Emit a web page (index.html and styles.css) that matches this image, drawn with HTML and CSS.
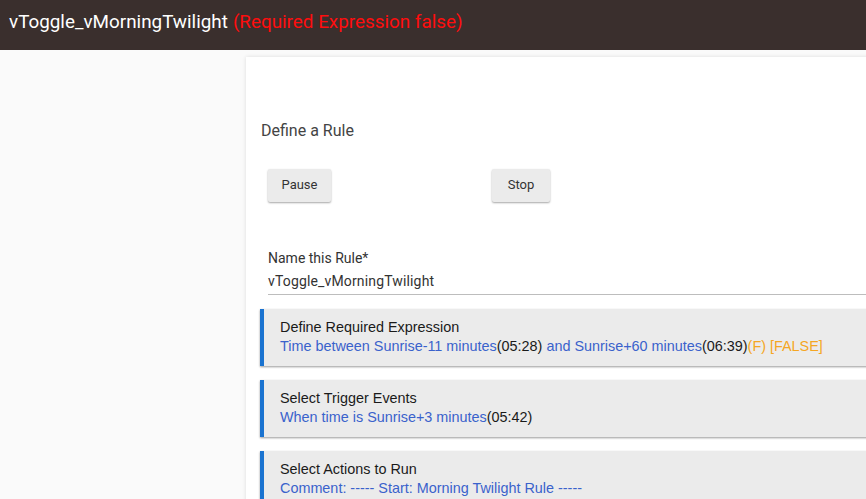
FILE: index.html
```html
<!DOCTYPE html>
<html>
<head>
<meta charset="utf-8">
<link rel="stylesheet" href="styles.css">
</head>
<body>
<header class="topbar">
  <span class="app-title">vToggle_vMorningTwilight</span>
  <span class="app-status">(Required Expression false)</span>
</header>
<div class="layout">
  <aside class="sidebar"></aside>
  <main class="panel">
    <h2 class="panel-title">Define a Rule</h2>
    <div class="actions">
      <button class="btn btn-pause">Pause</button>
      <button class="btn btn-stop">Stop</button>
    </div>
    <div class="field">
      <label class="field-label">Name this Rule*</label>
      <div class="field-value">vToggle_vMorningTwilight</div>
    </div>
    <div class="section">
      <div class="section-title">Define Required Expression</div>
      <div class="section-desc"><span class="lnk">Time between Sunrise-11 minutes</span>(05:28) <span class="lnk">and Sunrise+60 minutes</span>(06:39)<span class="warn">(F) [FALSE]</span></div>
    </div>
    <div class="section">
      <div class="section-title">Select Trigger Events</div>
      <div class="section-desc"><span class="lnk">When time is Sunrise+3 minutes</span>(05:42)</div>
    </div>
    <div class="section">
      <div class="section-title">Select Actions to Run</div>
      <div class="section-desc"><span class="lnk">Comment: ----- Start: Morning Twilight Rule -----</span></div>
    </div>
  </main>
</div>
</body>
</html>
```

FILE: styles.css
```css
html, body {
  margin: 0;
  padding: 0;
  overflow: hidden;
  height: 100%;
}
body {
  background: #fafafa;
  font-family: Roboto, "Liberation Sans", sans-serif;
}
.topbar {
  height: 50px;
  background: #3a2f2d;
  display: flex;
  align-items: center;
  padding-left: 9px;
  padding-bottom: 7px;
  box-sizing: border-box;
  font-size: 18.85px;
  white-space: nowrap;
}
.app-title {
  color: #ffffff;
}
.app-status {
  color: #ff0d0d;
  margin-left: 5px;
}
.layout {
  display: flex;
  width: 1100px;
}
.sidebar {
  width: 246px;
  flex: none;
}
.panel {
  margin-top: 7px;
  flex: 1;
  background: #ffffff;
  box-shadow: 0 0 4px rgba(0,0,0,0.12);
  padding: 64px 0 40px 14px;
  min-height: 600px;
}
.panel-title {
  margin: 0;
  font-size: 16px;
  font-weight: 400;
  line-height: 19px;
  color: #444;
  padding-left: 1px;
}
.actions {
  display: flex;
  margin-top: 29px;
  padding-left: 8px;
}
.btn {
  height: 33px;
  border: none;
  background: #ebebeb;
  color: #333;
  font-family: Roboto, sans-serif;
  font-size: 13px;
  border-radius: 2px;
  box-shadow: 0 1px 2px rgba(0,0,0,0.35);
  padding: 0 0 2px;
}
.btn-pause {
  width: 63px;
}
.btn-stop {
  width: 58px;
  margin-left: 161px;
}
.field {
  margin-top: 48px;
  margin-left: 8px;
  border-bottom: 1px solid #bdbdbd;
  padding-bottom: 5px;
}
.field-label {
  display: block;
  font-size: 14px;
  line-height: 16px;
  color: #333;
}
.field-value {
  margin-top: 7px;
  font-size: 14px;
  letter-spacing: 0.15px;
  line-height: 16px;
  color: #333;
}
.section {
  margin-top: 14px;
  background: #ebebeb;
  border-left: 4px solid #1a73d0;
  box-shadow: 0 1px 2px rgba(0,0,0,0.4);
  padding: 9px 0 10px 16px;
  font-family: "Liberation Sans", Arial, sans-serif;
  font-size: 14.4px;
  line-height: 19px;
  color: #1a1a1a;
  white-space: nowrap;
}
.lnk {
  color: #3a62cc;
}
.warn {
  color: #f5a623;
}
```
